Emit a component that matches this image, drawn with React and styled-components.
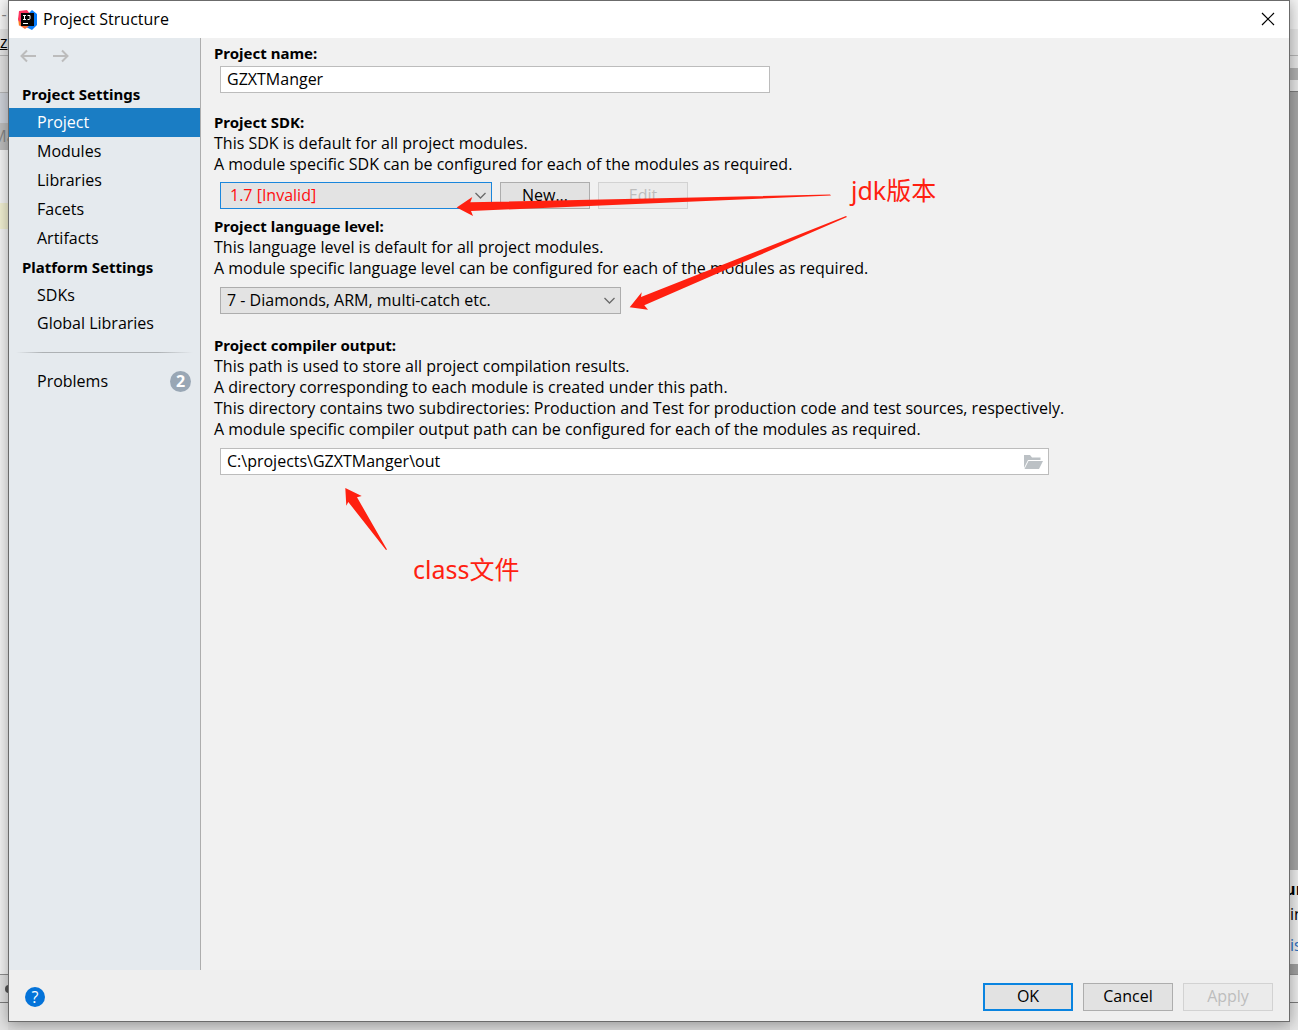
import React from "react";
import styled, { createGlobalStyle, css } from "styled-components";

const GlobalStyle = createGlobalStyle`
  *, *::before, *::after { box-sizing: border-box; }
  body {
    margin: 0;
    background: #dcdcdc;
    color: #000;
    font: 16px/21px "Open Sans", "Noto Sans CJK SC", sans-serif;
  }
  button, input, select { font: inherit; color: inherit; margin: 0; }
  p, h1, h2, ul { margin: 0; padding: 0; font-size: inherit; }
`;

const boldText = css`
  font-family: "Noto Sans", "Noto Sans CJK SC", sans-serif;
  font-size: 15px;
  font-weight: 700;
`;

const Desktop = styled.div`
  min-height: 100vh;
  display: grid;
  grid-template-columns: 8px minmax(0, 1fr) 8px;
  background: #dcdcdc;
`;

const Strip = styled.div`
  display: flex;
  flex-direction: column;
  overflow: hidden;
`;

const Band = styled.div`
  flex: ${(p) => (p.$fill ? "1 1 0" : "0 0 auto")};
  height: ${(p) => (p.$fill ? "auto" : `${p.$h}px`)};
  background: ${(p) => p.$bg};
  color: ${(p) => p.$ink || "#000"};
  font-weight: ${(p) => (p.$bold ? 700 : 400)};
  border-bottom: ${(p) => (p.$line ? `1px solid ${p.$line}` : "none")};
  line-height: ${(p) => p.$h}px;
  white-space: nowrap;
  display: flex;
  align-items: center;
  justify-content: ${(p) => p.$align || "flex-start"};
  overflow: hidden;
`;

const Dialog = styled.section`
  display: flex;
  flex-direction: column;
  margin-bottom: 8px;
  border: 1px solid #6b6b6b;
  background: #f1f1f1;
  box-shadow: 0 2px 14px rgba(0, 0, 0, 0.35);
  z-index: 1;
`;

const TitleBar = styled.header`
  height: 37px;
  display: flex;
  align-items: center;
  gap: 5px;
  padding: 0 12px 0 9px;
  background: #fff;
`;

const Title = styled.h1`
  flex: 1;
  font-weight: 400;
`;

const IconButton = styled.button`
  display: flex;
  align-items: center;
  justify-content: center;
  padding: 0;
  border: 0;
  background: none;
`;

const Body = styled.div`
  flex: 1;
  display: flex;
`;

const Sidebar = styled.nav`
  flex: 0 0 192px;
  background: #e5eaee;
  border-right: 1px solid #adadad;
`;

const History = styled.div`
  display: flex;
  gap: 15px;
  height: 42px;
  padding: 9px 10px;
  align-items: flex-start;
`;

const GroupTitle = styled.h2`
  height: 28px;
  padding-left: 13px;
  line-height: 28px;
  ${boldText}
`;

const NavList = styled.ul`
  display: grid;
  grid-auto-rows: ${(p) => p.$row}px;
  line-height: ${(p) => p.$row}px;
  list-style: none;
`;

const NavItem = styled.li`
  display: grid;
`;

const NavLink = styled.a`
  display: flex;
  align-items: center;
  justify-content: space-between;
  padding: 0 9px 0 28px;
  text-decoration: none;
  color: ${(p) => (p.$active ? "#fff" : "#000")};
  background: ${(p) => (p.$active ? "#1a7dc4" : "transparent")};
`;

const Separator = styled.hr`
  height: 1px;
  margin: 15px 7px 14px;
  border: 0;
  background: linear-gradient(90deg, transparent, #adb1b4 15%, #adb1b4 80%, transparent);
`;

const Count = styled.span`
  width: 21px;
  height: 21px;
  border-radius: 50%;
  background: #99a7b5;
  color: #fff;
  font-weight: 700;
  line-height: 21px;
  text-align: center;
`;

const Main = styled.main`
  position: relative;
  flex: 1;
  min-width: 0;
  padding: 5px 13px;
`;

const Section = styled.section`
  margin-bottom: ${(p) => p.$gap || 0}px;
`;

const Label = styled.label`
  display: block;
  ${boldText}
`;

const Controls = styled.div`
  display: flex;
  gap: 8px;
  margin: ${(p) => p.$top}px 0 0 6px;
`;

const Field = styled.div`
  flex: 0 1 ${(p) => p.$width}px;
  display: flex;
  align-items: center;
  height: 27px;
  padding-right: 5px;
  border: 1px solid #bcbcbc;
  background: #fff;
`;

const TextInput = styled.input`
  flex: 1;
  min-width: 0;
  height: 25px;
  padding: 0 6px 2px;
  border: 0;
  outline: 0;
  background: none;
`;

const SelectBox = styled.div`
  flex: 0 1 ${(p) => p.$width}px;
  display: grid;
  align-items: center;
  height: 27px;
  border: 1px solid ${(p) => (p.$focused ? "#1a86dc" : "#adadad")};
  background: #e3e3e3;

  select, svg { grid-area: 1 / 1; }
  svg { justify-self: end; margin-right: 4px; pointer-events: none; }
`;

const Select = styled.select`
  appearance: none;
  width: 100%;
  height: 25px;
  padding: 0 24px 0 ${(p) => (p.$invalid ? 9 : 6)}px;
  border: 0;
  outline: 0;
  background: none;
  color: ${(p) => (p.$invalid ? "#ff0f0f" : "#000")};
`;

const Button = styled.button`
  width: 90px;
  height: ${(p) => p.$h || 28}px;
  padding: 0;
  border: 1px solid #adadad;
  background: #e2e2e2;
  ${(p) => p.$primary && css`border: 2px solid #0a84e0;`}
  &:disabled {
    border-color: #d2d2d2;
    background: #ebebeb;
    color: #bdbdbd;
  }
`;

const Footer = styled.footer`
  display: flex;
  align-items: center;
  gap: 10px;
  height: 51px;
  padding: 2px 16px 0;
  background: #efefef;
`;

const HelpButton = styled.button`
  width: 20px;
  height: 20px;
  margin-right: auto;
  padding: 0;
  border: 0;
  border-radius: 50%;
  background: #0473d9;
  color: #fff;
  line-height: 20px;
`;

const Arrows = styled.svg`
  position: absolute;
  top: 0;
  left: 0;
  pointer-events: none;
`;

const Note = styled.span`
  position: absolute;
  left: ${(p) => p.$x}px;
  top: ${(p) => p.$y}px;
  color: #ff2010;
  font-family: "Noto Sans", "Noto Sans CJK SC", sans-serif;
  font-size: 25px;
  line-height: 36px;
  white-space: nowrap;
`;

function Logo() {
  return (
    <svg width="20" height="20" viewBox="0 0 20 20" aria-hidden="true">
      <path d="M0 8 4 6v7l-3 3z" fill="#fc801d" />
      <path d="M1 1 9 0l3 4-8 10L0 10z" fill="#fe3560" />
      <path d="M11 3 14 0l5 4v11l-5 5-6-3z" fill="#087cfa" />
      <path d="M1 15 4 12l7 4-4 3z" fill="#f9703a" />
      <path d="M3 3h13v13H3z" fill="#050505" />
      <path d="M5 5.500h3M6.500 5.500v4M5 9.500h3M9.500 5.500H12v3q0 1-1 1H9.500M5 13.500h5" fill="none" stroke="#fff" />
    </svg>
  );
}

function ArrowIcon({ forward }) {
  return (
    <svg width="18" height="18" viewBox="0 0 18 18" fill="none" stroke="#bcbcbc" strokeWidth="2">
      <path d={forward ? "M1 9h15M10 3.500 15.500 9 10 14.500" : "M17 9H2M8 3.500 2.500 9 8 14.500"} />
    </svg>
  );
}

function Chevron() {
  return (
    <svg width="13" height="8" viewBox="0 0 13 8" fill="none" stroke="#6a6a6a" strokeWidth="1.300">
      <path d="M1.500 1 6.500 6l5-5" />
    </svg>
  );
}

function Nav({ items, row }) {
  return (
    <NavList $row={row}>
      {items.map((name) => (
        <NavItem key={name}>
          <NavLink href="#" $active={name === "Project"}>
            {name}
            {name === "Problems" && <Count>2</Count>}
          </NavLink>
        </NavItem>
      ))}
    </NavList>
  );
}

export default function App() {
  return (
    <>
      <GlobalStyle />
      <Desktop>
        <Strip>
          <Band $h={29} $bg="#f6f6f6" $ink="#888" $align="center">-</Band>
          <Band $h={27} $bg="#e6e6e6" $line="#b5b5b5"><u>z</u>e</Band>
          <Band $h={37} $bg="#e2e2e2" $line="#b5b5b5" />
          <Band $h={30} $bg="#cfd3da" />
          <Band $h={27} $bg="#bdbdbd" $ink="#858585" $align="center">Ma</Band>
          <Band $h={53} $bg="#f5f5f5" />
          <Band $h={26} $bg="#f2f0d2" />
          <Band $fill $bg="#f4f4f4" $line="#8e8e8e" />
          <Band $h={28} $bg="#e2e2e2" $line="#7c7c7c" $align="flex-end">
            <svg width="3" height="8" viewBox="0 0 3 8"><circle cx="4" cy="4" r="4" fill="#555" /></svg>
          </Band>
          <Band $h={27} $bg="#e2e2e2" />
        </Strip>

        <Dialog aria-label="Project Structure">
          <TitleBar>
            <Logo />
            <Title>Project Structure</Title>
            <IconButton aria-label="Close">
              <svg width="18" height="18" viewBox="0 0 18 18" stroke="#000" strokeWidth="1.200">
                <path d="M3 2l12 12M15 2 3 14" />
              </svg>
            </IconButton>
          </TitleBar>

          <Body>
            <Sidebar>
              <History>
                <IconButton aria-label="Back"><ArrowIcon /></IconButton>
                <IconButton aria-label="Forward"><ArrowIcon forward /></IconButton>
              </History>
              <GroupTitle>Project Settings</GroupTitle>
              <Nav row={29} items={["Project", "Modules", "Libraries", "Facets", "Artifacts"]} />
              <GroupTitle>Platform Settings</GroupTitle>
              <Nav row={28} items={["SDKs", "Global Libraries"]} />
              <Separator />
              <Nav row={28} items={["Problems"]} />
            </Sidebar>

            <Main>
              <Section $gap={19}>
                <Label htmlFor="name">Project name:</Label>
                <Controls $top={2}>
                  <Field $width={550}><TextInput id="name" defaultValue="GZXTManger" /></Field>
                </Controls>
              </Section>

              <Section $gap={7}>
                <Label htmlFor="sdk">Project SDK:</Label>
                <p>This SDK is default for all project modules.</p>
                <p>A module specific SDK can be configured for each of the modules as required.</p>
                <Controls $top={7}>
                  <SelectBox $width={272} $focused>
                    <Select id="sdk" $invalid><option>1.7 [Invalid]</option></Select>
                    <Chevron />
                  </SelectBox>
                  <Button $h={27}>New...</Button>
                  <Button $h={27} disabled>Edit</Button>
                </Controls>
              </Section>

              <Section $gap={21}>
                <Label htmlFor="level">Project language level:</Label>
                <p>This language level is default for all project modules.</p>
                <p>A module specific language level can be configured for each of the modules as required.</p>
                <Controls $top={8}>
                  <SelectBox $width={401}>
                    <Select id="level"><option>7 - Diamonds, ARM, multi-catch etc.</option></Select>
                    <Chevron />
                  </SelectBox>
                </Controls>
              </Section>

              <Section>
                <Label htmlFor="output">Project compiler output:</Label>
                <p>This path is used to store all project compilation results.</p>
                <p>A directory corresponding to each module is created under this path.</p>
                <p>This directory contains two subdirectories: Production and Test for production code and test sources, respectively.</p>
                <p>A module specific compiler output path can be configured for each of the modules as required.</p>
                <Controls $top={8}>
                  <Field $width={829}>
                    <TextInput id="output" defaultValue="C:\projects\GZXTManger\out" />
                    <IconButton aria-label="Browse">
                      <svg width="19" height="17" viewBox="0 0 19 17" fill="#bcc1c5">
                        <path d="M0 2h6l2 2.500h8.500V7H4L0 15z" />
                        <path d="M4.500 8H19l-4 8H0.500z" />
                      </svg>
                    </IconButton>
                  </Field>
                </Controls>
              </Section>

              <Arrows width="700" height="540" viewBox="201 38 700 540" fill="#ff2010">
                <path d="M456.700 207.500 472.300 197 470.300 202.300 830 194.600 831 195.600 471 211 473 216z" />
                <path d="M629.700 307.300 641.700 292.300 641 297 846 216 847 217 644.300 305.300 648 309.700z" />
                <path d="M345.300 488 361.700 496 357 497.300 387 549.500 386 550 348.300 502 346.300 505.700z" />
              </Arrows>
              <Note $x={650} $y={134}>jdk版本</Note>
              <Note $x={212} $y={513}>class文件</Note>
            </Main>
          </Body>

          <Footer>
            <HelpButton aria-label="Help">?</HelpButton>
            <Button $primary>OK</Button>
            <Button>Cancel</Button>
            <Button disabled>Apply</Button>
          </Footer>
        </Dialog>

        <Strip>
          <Band $h={29} $bg="#f4f4f4" />
          <Band $h={27} $bg="#e6e6e6" $line="#b5b5b5" />
          <Band $h={12} $bg="#e6e6e6" />
          <Band $h={12} $bg="#b0b0b0" />
          <Band $h={12} $bg="#e6e6e6" $line="#7c7c7c" />
          <Band $fill $bg="#a6a6a6" />
          <Band $h={7} $bg="#ececec" />
          <Band $h={25} $bg="#ececec" $bold $align="center">ur</Band>
          <Band $h={25} $bg="#ececec">in</Band>
          <Band $h={37} $bg="#ececec" $ink="#2a6fc0">is</Band>
          <Band $h={11} $bg="#a0a0a0" $line="#8e8e8e" />
          <Band $h={28} $bg="#ececec" $line="#7c7c7c" />
          <Band $h={27} $bg="#e6e6e6" />
        </Strip>
      </Desktop>
    </>
  );
}
